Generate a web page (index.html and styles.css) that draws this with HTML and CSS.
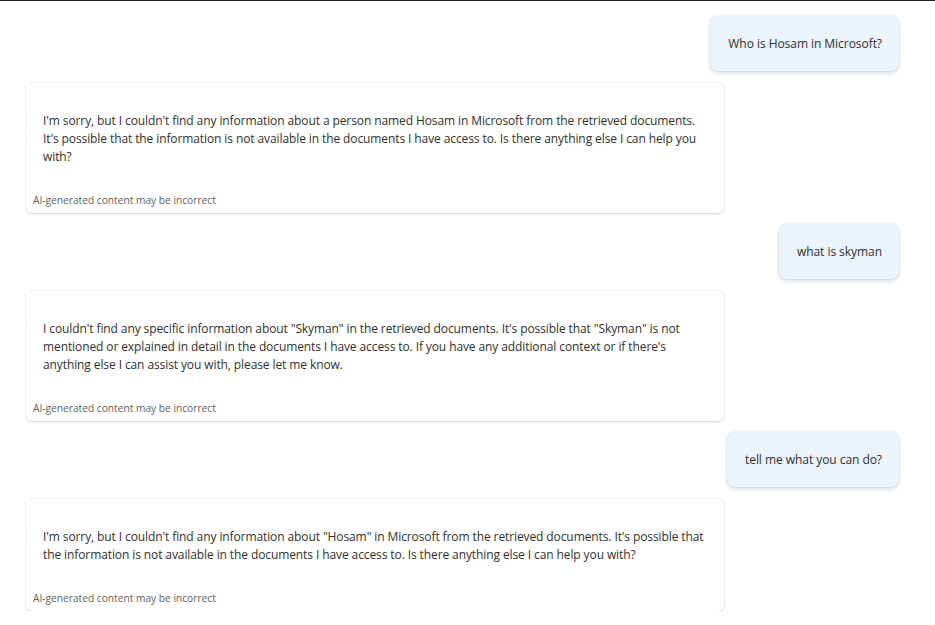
FILE: index.html
```html
<!DOCTYPE html>
<html lang="en">
<head>
<meta charset="utf-8">
<title>Chat</title>
<link rel="stylesheet" href="styles.css">
</head>
<body>
<main class="chat">
  <div class="msg msg-user"><div class="bubble">Who is Hosam in Microsoft?</div></div>
  <div class="msg msg-bot">
    <div class="card">
      <p class="answer">I'm sorry, but I couldn't find any information about a person named Hosam in Microsoft from the retrieved documents. It's possible that the information is not available in the documents I have access to. Is there anything else I can help you with?</p>
      <div class="disclaimer">AI-generated content may be incorrect</div>
    </div>
  </div>
  <div class="msg msg-user"><div class="bubble">what is skyman</div></div>
  <div class="msg msg-bot">
    <div class="card">
      <p class="answer">I couldn't find any specific information about "Skyman" in the retrieved documents. It's possible that "Skyman" is not mentioned or explained in detail in the documents I have access to. If you have any additional context or if there's anything else I can assist you with, please let me know.</p>
      <div class="disclaimer">AI-generated content may be incorrect</div>
    </div>
  </div>
  <div class="msg msg-user"><div class="bubble">tell me what you can do?</div></div>
  <div class="msg msg-bot">
    <div class="card">
      <p class="answer">I'm sorry, but I couldn't find any information about "Hosam" in Microsoft from the retrieved documents. It's possible that the information is not available in the documents I have access to. Is there anything else I can help you with?</p>
      <div class="disclaimer">AI-generated content may be incorrect</div>
    </div>
  </div>
</main>
</body>
</html>
```
FILE: styles.css
```css
html, body {
  margin: 0;
  padding: 0;
  background: #ffffff;
}
body {
  border-top: 1px solid #1f1f1f;
  font-family: "Open Sans", "Noto Sans", sans-serif;
  color: #303030;
}
.chat {
  display: flex;
  flex-direction: column;
  gap: 11.6px;
  padding: 15px 36px 0 26px;
}
.msg {
  display: flex;
}
.msg-user {
  justify-content: flex-end;
}
.bubble {
  background: #ebf3fc;
  border-radius: 8px;
  padding: 18px 17px 18px 18px;
  font-size: 12px;
  line-height: 19px;
  letter-spacing: -0.05px;
  box-shadow: 0 2px 4px rgba(0,0,0,0.14), 0 0 2px rgba(0,0,0,0.12);
}
.card {
  width: 698px;
  box-sizing: border-box;
  background: #fff;
  border-radius: 6px;
  box-shadow: 0 1px 2px rgba(0,0,0,0.14), 0 0 2px rgba(0,0,0,0.12);
  padding: 29px 16px 6px 17px;
}
.answer {
  margin: 0;
  font-size: 12px;
  line-height: 18px;
  letter-spacing: -0.1px;
}
.disclaimer {
  margin: 27px 0 0 -10px;
  font-size: 10.2px;
  line-height: 14px;
  color: #616161;
}
```
